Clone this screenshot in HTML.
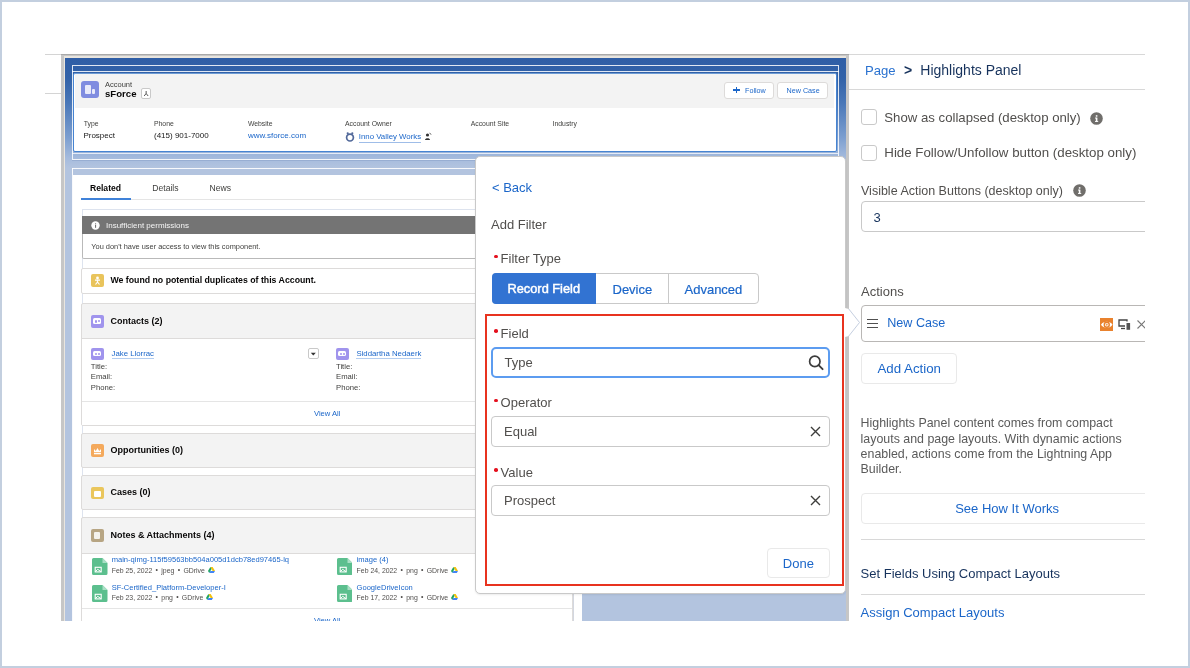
<!DOCTYPE html>
<html><head><meta charset="utf-8"><style>
html,body{margin:0;padding:0;background:#fff}
#root{position:relative;width:1190px;height:668px;overflow:hidden;background:#fff;will-change:transform;font-family:"Liberation Sans",sans-serif}
#frame{position:absolute;left:0;top:0;width:1190px;height:668px;box-sizing:border-box;border:2px solid #c3cfdf;pointer-events:none}
.t{position:absolute;white-space:nowrap;line-height:1}
.r{position:absolute}
</style></head><body><div id="root">
<div class="r" style="left:0;top:0;width:1190px;height:621px;overflow:hidden">
<div class="r" style="left:45px;top:54px;width:17px;height:1px;background:#d4d4d4"></div>
<div class="r" style="left:45px;top:93px;width:17px;height:1px;background:#d4d4d4"></div>
<div class="r" style="left:849px;top:54px;width:296px;height:1px;background:#d8d8d8"></div>
<div class="r" style="left:849px;top:89px;width:296px;height:1px;background:#d8d8d8"></div>
<div class="r" style="left:61px;top:54px;width:788px;height:567px;background:#c6c6c6"></div>
<div class="r" style="left:61px;top:54px;width:788px;height:1px;background:#a9a9a9"></div>
<div class="r" style="left:64px;top:56px;width:782px;height:565px;background:#e9e5de"></div>
<div class="r" style="left:65px;top:57.5px;width:781px;height:563.5px;background:linear-gradient(180deg,#2f5ea6 0px,#3262a8 20px,#4977b8 45px,#7d9fd0 80px,#a5bbdd 100px,#b3c4df 110px,#b3c4df 563px)"></div>
<div class="r" style="left:72px;top:65px;width:766.5px;height:95px;border:1px solid rgba(255,255,255,.85);box-sizing:border-box"></div>
<div class="r" style="left:72px;top:71px;width:766.5px;height:1px;background:rgba(255,255,255,.85)"></div>
<div class="r" style="left:73px;top:72.5px;width:764.3px;height:79.5px;background:#fff;border:1.5px solid #4684d2;border-radius:2px;box-sizing:border-box"></div>
<div class="r" style="left:74.5px;top:74px;width:759.5px;height:34.3px;background:#f3f3f3"></div>
<div class="r" style="left:74px;top:72.5px;width:762px;height:1.2999999999999972px;background:#6d9bd4"></div>
<div class="r" style="left:72px;top:152.5px;width:766px;height:1.0px;background:rgba(255,255,255,.75)"></div>
<div class="r" style="left:72px;top:160.3px;width:774px;height:0.8999999999999773px;background:#98aed2"></div>
<div class="r" style="left:72px;top:167.5px;width:510px;height:1.0px;background:rgba(255,255,255,.9)"></div>
<div class="r" style="left:71.5px;top:167.5px;width:1.2000000000000028px;height:453.5px;background:rgba(255,255,255,.9)"></div>
<div class="r" style="left:81px;top:80.8px;width:17.5px;height:17.5px;background:#7f8ce0;border-radius:3px"></div>
<div class="r" style="left:85px;top:85px;width:6.200000000000003px;height:9px;background:rgba(255,255,255,.82);border-radius:1px"></div>
<div class="r" style="left:91.6px;top:89px;width:3.8000000000000114px;height:5px;background:rgba(255,255,255,.82);border-radius:1px"></div>
<div class="t" style="left:105.0px;top:80.85px;font-size:7.5px;color:#3e3e3c;font-weight:400;">Account</div>
<div class="t" style="left:105.0px;top:89.47px;font-size:9.6px;color:#080707;font-weight:700;">sForce</div>
<div class="r" style="left:141px;top:87.5px;width:10.300000000000011px;height:11.0px;border:1px solid #c9c9c9;border-radius:2px;background:#fff;box-sizing:border-box"></div>
<svg class="r" style="left:141px;top:87.5px" width="10.3" height="11" viewBox="0 0 10 11"><path d="M5 3v2.5M5 5.5L3 8M5 5.5L7 8" stroke="#444" stroke-width="0.9" fill="none"/></svg>
<div class="r" style="left:723.7px;top:81.6px;width:50.5px;height:17.200000000000003px;background:#fff;border:1px solid #dddbda;border-radius:3px;box-sizing:border-box"></div>
<div class="r" style="left:777.2px;top:81.6px;width:51.299999999999955px;height:17.200000000000003px;background:#fff;border:1px solid #dddbda;border-radius:3px;box-sizing:border-box"></div>
<div class="r" style="left:733.3px;top:89.3px;width:6.400000000000091px;height:1.2999999999999972px;background:#1b66c9"></div>
<div class="r" style="left:735.8px;top:86.8px;width:1.400000000000091px;height:6.400000000000006px;background:#1b66c9"></div>
<div class="t" style="left:745.0px;top:86.90px;font-size:7.2px;color:#1b66c9;font-weight:400;">Follow</div>
<div class="t" style="left:786.5px;top:86.90px;font-size:7.2px;color:#1b66c9;font-weight:400;">New Case</div>
<div class="t" style="left:83.8px;top:120.80px;font-size:6.85px;color:#3e3e3c;font-weight:400;">Type</div>
<div class="t" style="left:154.0px;top:120.80px;font-size:6.85px;color:#3e3e3c;font-weight:400;">Phone</div>
<div class="t" style="left:247.9px;top:120.80px;font-size:6.85px;color:#3e3e3c;font-weight:400;">Website</div>
<div class="t" style="left:345.0px;top:120.80px;font-size:6.85px;color:#3e3e3c;font-weight:400;">Account Owner</div>
<div class="t" style="left:470.7px;top:120.80px;font-size:6.85px;color:#3e3e3c;font-weight:400;">Account Site</div>
<div class="t" style="left:552.6px;top:120.80px;font-size:6.85px;color:#3e3e3c;font-weight:400;">Industry</div>
<div class="t" style="left:83.4px;top:132.03px;font-size:8.0px;color:#181818;font-weight:400;">Prospect</div>
<div class="t" style="left:154.0px;top:132.03px;font-size:8.0px;color:#181818;font-weight:400;">(415) 901-7000</div>
<div class="t" style="left:247.9px;top:132.23px;font-size:8.0px;color:#1b66c9;font-weight:400;">www.sforce.com</div>
<svg class="r" style="left:345px;top:131px" width="11" height="11" viewBox="0 0 11 11"><circle cx="5" cy="6.6" r="3.4" fill="#fff" stroke="#52699a" stroke-width="1.7"/><circle cx="2.7" cy="2.3" r="1.1" fill="#52699a"/><circle cx="7.3" cy="2.3" r="1.1" fill="#52699a"/></svg>
<div class="t" style="left:358.8px;top:133.36px;font-size:7.84px;color:#1b66c9;font-weight:400;border-bottom:1px solid #9fbde8;line-height:1.05">Inno Valley Works</div>
<svg class="r" style="left:424px;top:131.5px" width="8" height="9" viewBox="0 0 8 9"><circle cx="3.5" cy="3" r="1.6" fill="#333"/><path d="M1 8c0-2.5 5-2.5 5 0z" fill="#333"/><path d="M5.5 1.2l1.8 1.2" stroke="#333" stroke-width="0.8"/></svg>
<div class="r" style="left:72.7px;top:174.5px;width:509.50000000000006px;height:446.5px;background:#fff"></div>
<div class="r" style="left:572px;top:174.5px;width:1.5px;height:446.5px;background:#d3d7e0"></div>
<div class="t" style="left:90.0px;top:184.02px;font-size:8.6px;color:#080707;font-weight:700;">Related</div>
<div class="t" style="left:152.3px;top:184.02px;font-size:8.6px;color:#3e3e3c;font-weight:400;">Details</div>
<div class="t" style="left:209.6px;top:184.02px;font-size:8.6px;color:#3e3e3c;font-weight:400;">News</div>
<div class="r" style="left:81px;top:198.5px;width:492px;height:1.0px;background:#e5e5e5"></div>
<div class="r" style="left:81px;top:198px;width:49.599999999999994px;height:2px;background:#3f82d9"></div>
<div class="r" style="left:81.5px;top:208.5px;width:491.5px;height:0.8000000000000114px;background:#dde3ee"></div>
<div class="r" style="left:81.5px;top:209px;width:0.7999999999999972px;height:412px;background:#dde3ee"></div>
<div class="r" style="left:81.5px;top:216.2px;width:491.5px;height:17.600000000000023px;background:#747474"></div>
<svg class="r" style="left:90.5px;top:221px" width="9" height="9" viewBox="0 0 9 9"><circle cx="4.5" cy="4.5" r="4.2" fill="#fff"/><rect x="4" y="4" width="1.1" height="2.8" fill="#747474"/><rect x="4" y="2.3" width="1.1" height="1.1" fill="#747474"/></svg>
<div class="t" style="left:106.0px;top:221.53px;font-size:8px;color:#f5f5f5;font-weight:400;">Insufficient permissions</div>
<div class="r" style="left:81.5px;top:233.8px;width:491.5px;height:25.19999999999999px;border:1px solid #b9b9b9;border-top:none;border-radius:0 0 2px 2px;box-sizing:border-box;background:#fff"></div>
<div class="t" style="left:91.3px;top:243.03px;font-size:7.4px;color:#3e3e3c;font-weight:400;">You don't have user access to view this component.</div>
<div class="r" style="left:81.4px;top:267.7px;width:491.6px;height:26.30000000000001px;border:1px solid #dddbda;border-radius:2px;box-sizing:border-box;background:#fff"></div>
<div class="r" style="left:90.8px;top:274.2px;width:13.100000000000009px;height:13.100000000000023px;background:#e9c45c;border-radius:2px"></div>
<svg class="r" style="left:90.8px;top:274.2px" width="13" height="13" viewBox="0 0 13 13"><circle cx="6.5" cy="4" r="1.4" fill="#fff"/><path d="M4 6.2h5M6.5 5.5v2.5M6.5 8L4.5 10.5M6.5 8l2 2.5" stroke="#fff" stroke-width="1.2" fill="none"/></svg>
<div class="t" style="left:110.4px;top:276.49px;font-size:8.75px;color:#080707;font-weight:700;">We found no potential duplicates of this Account.</div>
<div class="r" style="left:81.4px;top:303px;width:491.6px;height:123px;border:1px solid #dddbda;border-radius:2px;box-sizing:border-box;background:#f3f3f3"></div>
<div class="r" style="left:82.4px;top:338px;width:489.6px;height:87px;background:#fff;border-top:1px solid #dddbda;box-sizing:border-box"></div>
<div class="r" style="left:90.8px;top:315.1px;width:13.100000000000009px;height:12.800000000000011px;background:#a094ed;border-radius:2px"></div>
<div class="t" style="left:110.4px;top:316.98px;font-size:9.0px;color:#080707;font-weight:700;">Contacts (2)</div>
<div class="r" style="left:93.2px;top:318.40000000000003px;width:8.0px;height:5.7999999999999545px;background:#fff;border-radius:1.5px"></div>
<div class="r" style="left:95.0px;top:320.40000000000003px;width:1.7999999999999972px;height:2.3999999999999773px;background:#a094ed;border-radius:1px"></div>
<div class="r" style="left:98.0px;top:320.40000000000003px;width:1.5999999999999943px;height:1.7999999999999545px;background:#a094ed;border-radius:1px"></div>
<div class="r" style="left:90.8px;top:347.5px;width:12.799999999999997px;height:12.699999999999989px;background:#a094ed;border-radius:2px"></div>
<div class="r" style="left:93.2px;top:350.9px;width:8.0px;height:5.600000000000023px;background:#fff;border-radius:1.5px"></div>
<div class="r" style="left:95.0px;top:352.9px;width:1.7999999999999972px;height:2.3000000000000114px;background:#a094ed;border-radius:1px"></div>
<div class="r" style="left:98.0px;top:352.9px;width:1.5999999999999943px;height:1.7000000000000455px;background:#a094ed;border-radius:1px"></div>
<div class="t" style="left:111.5px;top:350.20px;font-size:7.8px;color:#1b66c9;font-weight:400;border-bottom:1px solid #b3cdf0;line-height:1.02">Jake Llorrac</div>
<div class="t" style="left:90.8px;top:363.08px;font-size:7.7px;color:#3e3e3c;font-weight:400;">Title:</div>
<div class="t" style="left:90.8px;top:373.38px;font-size:7.7px;color:#3e3e3c;font-weight:400;">Email:</div>
<div class="t" style="left:90.8px;top:383.88px;font-size:7.7px;color:#3e3e3c;font-weight:400;">Phone:</div>
<div class="r" style="left:336px;top:347.5px;width:12.800000000000011px;height:12.699999999999989px;background:#a094ed;border-radius:2px"></div>
<div class="r" style="left:338.4px;top:350.9px;width:8.0px;height:5.600000000000023px;background:#fff;border-radius:1.5px"></div>
<div class="r" style="left:340.2px;top:352.9px;width:1.8000000000000114px;height:2.3000000000000114px;background:#a094ed;border-radius:1px"></div>
<div class="r" style="left:343.2px;top:352.9px;width:1.6000000000000227px;height:1.7000000000000455px;background:#a094ed;border-radius:1px"></div>
<div class="t" style="left:356.4px;top:350.20px;font-size:7.8px;color:#1b66c9;font-weight:400;border-bottom:1px solid #b3cdf0;line-height:1.02">Siddartha Nedaerk</div>
<div class="t" style="left:336.0px;top:363.08px;font-size:7.7px;color:#3e3e3c;font-weight:400;">Title:</div>
<div class="t" style="left:336.0px;top:373.38px;font-size:7.7px;color:#3e3e3c;font-weight:400;">Email:</div>
<div class="t" style="left:336.0px;top:383.88px;font-size:7.7px;color:#3e3e3c;font-weight:400;">Phone:</div>
<div class="r" style="left:307.7px;top:348.3px;width:11.0px;height:10.399999999999977px;border:1px solid #c9c9c9;border-radius:2px;box-sizing:border-box;background:#fff"></div>
<svg class="r" style="left:310px;top:350.5px" width="6.5" height="6" viewBox="0 0 6.5 6"><path d="M0.8 1.8h5L3.3 4.6z" fill="#333"/></svg>
<div class="r" style="left:82.4px;top:400.6px;width:489.6px;height:1.0px;background:#e5e5e5"></div>
<div class="t" style="left:314.0px;top:409.87px;font-size:7.6px;color:#1b66c9;font-weight:400;">View All</div>
<div class="r" style="left:81.4px;top:432.6px;width:491.6px;height:35.0px;border:1px solid #dddbda;border-radius:2px;box-sizing:border-box;background:#f3f3f3"></div>
<div class="r" style="left:90.8px;top:444.0px;width:13.100000000000009px;height:12.800000000000011px;background:#f4a95c;border-radius:2px"></div>
<div class="t" style="left:110.4px;top:445.88px;font-size:9.0px;color:#080707;font-weight:700;">Opportunities (0)</div>
<svg class="r" style="left:90.8px;top:444px" width="13" height="13" viewBox="0 0 13 13"><path d="M3 5l1.8 2 1.7-3 1.7 3L10 5v3.3H3z" fill="#fff"/><rect x="3" y="9" width="7" height="1.3" fill="#fff"/></svg>
<div class="r" style="left:81.4px;top:474.8px;width:491.6px;height:35.39999999999998px;border:1px solid #dddbda;border-radius:2px;box-sizing:border-box;background:#f3f3f3"></div>
<div class="r" style="left:90.8px;top:486.6px;width:13.100000000000009px;height:12.800000000000011px;background:#eac65c;border-radius:2px"></div>
<div class="t" style="left:110.4px;top:488.48px;font-size:9.0px;color:#080707;font-weight:700;">Cases (0)</div>
<div class="r" style="left:94px;top:491px;width:6.700000000000003px;height:6px;background:#fff;border-radius:1px"></div>
<div class="r" style="left:81.4px;top:517.2px;width:491.6px;height:142.79999999999995px;border:1px solid #dddbda;border-radius:2px;box-sizing:border-box;background:#f3f3f3"></div>
<div class="r" style="left:82.4px;top:552.6px;width:489.6px;height:106.39999999999998px;background:#fff;border-top:1px solid #dddbda;box-sizing:border-box"></div>
<div class="r" style="left:90.8px;top:528.8px;width:13.100000000000009px;height:12.799999999999955px;background:#b7a583;border-radius:2px"></div>
<div class="t" style="left:110.4px;top:530.68px;font-size:9.0px;color:#080707;font-weight:700;">Notes &amp; Attachments (4)</div>
<div class="r" style="left:94.3px;top:531.5px;width:6.200000000000003px;height:7.5px;background:rgba(255,255,255,.85);border-radius:1px"></div>
<svg class="r" style="left:92px;top:558.1px" width="15.5" height="17" viewBox="0 0 15.5 17"><path d="M1.5 0h9l5 5v10.5a1.5 1.5 0 0 1-1.5 1.5h-12.5A1.5 1.5 0 0 1 0 15.5v-14A1.5 1.5 0 0 1 1.5 0z" fill="#5cbf8e"/><path d="M10.5 0v5h5z" fill="#a9e0c5"/><rect x="3.2" y="9.3" width="6" height="4.6" fill="none" stroke="#fff" stroke-width="1.1"/><path d="M3.5 13.5l2.2-2.2 3.3 2.4" stroke="#fff" stroke-width="1" fill="none"/></svg>
<div class="t" style="left:111.7px;top:556.21px;font-size:7.55px;color:#1b66c9;font-weight:400;">main-qimg-115f59563bb504a005d1dcb78ed97465-lq</div>
<div class="t" style="left:111.7px;top:566.56px;font-size:6.9px;color:#514f4d;font-weight:400;">Feb 25, 2022<span style="margin:0 3.3px">•</span>jpeg<span style="margin:0 3.3px">•</span>GDrive<svg style="margin-left:3px;vertical-align:-0.5px" width="7" height="6" viewBox="0 0 7 6"><path d="M2.3 0h2.4l2.3 4H4.6z" fill="#f4c20d"/><path d="M2.3 0L0 4l1.2 2 2.3-4z" fill="#1fa463"/><path d="M1.2 6h4.6L7 4H2.4z" fill="#4285f4"/></svg></div>
<svg class="r" style="left:92px;top:585.4px" width="15.5" height="17" viewBox="0 0 15.5 17"><path d="M1.5 0h9l5 5v10.5a1.5 1.5 0 0 1-1.5 1.5h-12.5A1.5 1.5 0 0 1 0 15.5v-14A1.5 1.5 0 0 1 1.5 0z" fill="#5cbf8e"/><path d="M10.5 0v5h5z" fill="#a9e0c5"/><rect x="3.2" y="9.3" width="6" height="4.6" fill="none" stroke="#fff" stroke-width="1.1"/><path d="M3.5 13.5l2.2-2.2 3.3 2.4" stroke="#fff" stroke-width="1" fill="none"/></svg>
<div class="t" style="left:111.7px;top:583.51px;font-size:7.55px;color:#1b66c9;font-weight:400;">SF-Certified_Platform-Developer-I</div>
<div class="t" style="left:111.7px;top:593.86px;font-size:6.9px;color:#514f4d;font-weight:400;">Feb 23, 2022<span style="margin:0 3.3px">•</span>png<span style="margin:0 3.3px">•</span>GDrive<svg style="margin-left:3px;vertical-align:-0.5px" width="7" height="6" viewBox="0 0 7 6"><path d="M2.3 0h2.4l2.3 4H4.6z" fill="#f4c20d"/><path d="M2.3 0L0 4l1.2 2 2.3-4z" fill="#1fa463"/><path d="M1.2 6h4.6L7 4H2.4z" fill="#4285f4"/></svg></div>
<svg class="r" style="left:336.8px;top:558.1px" width="15.5" height="17" viewBox="0 0 15.5 17"><path d="M1.5 0h9l5 5v10.5a1.5 1.5 0 0 1-1.5 1.5h-12.5A1.5 1.5 0 0 1 0 15.5v-14A1.5 1.5 0 0 1 1.5 0z" fill="#5cbf8e"/><path d="M10.5 0v5h5z" fill="#a9e0c5"/><rect x="3.2" y="9.3" width="6" height="4.6" fill="none" stroke="#fff" stroke-width="1.1"/><path d="M3.5 13.5l2.2-2.2 3.3 2.4" stroke="#fff" stroke-width="1" fill="none"/></svg>
<div class="t" style="left:356.6px;top:556.21px;font-size:7.55px;color:#1b66c9;font-weight:400;">image (4)</div>
<div class="t" style="left:356.6px;top:566.56px;font-size:6.9px;color:#514f4d;font-weight:400;">Feb 24, 2022<span style="margin:0 3.3px">•</span>png<span style="margin:0 3.3px">•</span>GDrive<svg style="margin-left:3px;vertical-align:-0.5px" width="7" height="6" viewBox="0 0 7 6"><path d="M2.3 0h2.4l2.3 4H4.6z" fill="#f4c20d"/><path d="M2.3 0L0 4l1.2 2 2.3-4z" fill="#1fa463"/><path d="M1.2 6h4.6L7 4H2.4z" fill="#4285f4"/></svg></div>
<svg class="r" style="left:336.8px;top:585.4px" width="15.5" height="17" viewBox="0 0 15.5 17"><path d="M1.5 0h9l5 5v10.5a1.5 1.5 0 0 1-1.5 1.5h-12.5A1.5 1.5 0 0 1 0 15.5v-14A1.5 1.5 0 0 1 1.5 0z" fill="#5cbf8e"/><path d="M10.5 0v5h5z" fill="#a9e0c5"/><rect x="3.2" y="9.3" width="6" height="4.6" fill="none" stroke="#fff" stroke-width="1.1"/><path d="M3.5 13.5l2.2-2.2 3.3 2.4" stroke="#fff" stroke-width="1" fill="none"/></svg>
<div class="t" style="left:356.6px;top:583.51px;font-size:7.55px;color:#1b66c9;font-weight:400;">GoogleDriveIcon</div>
<div class="t" style="left:356.6px;top:593.86px;font-size:6.9px;color:#514f4d;font-weight:400;">Feb 17, 2022<span style="margin:0 3.3px">•</span>png<span style="margin:0 3.3px">•</span>GDrive<svg style="margin-left:3px;vertical-align:-0.5px" width="7" height="6" viewBox="0 0 7 6"><path d="M2.3 0h2.4l2.3 4H4.6z" fill="#f4c20d"/><path d="M2.3 0L0 4l1.2 2 2.3-4z" fill="#1fa463"/><path d="M1.2 6h4.6L7 4H2.4z" fill="#4285f4"/></svg></div>
<div class="r" style="left:82.4px;top:607.5px;width:489.6px;height:1.0px;background:#e5e5e5"></div>
<div class="t" style="left:314.0px;top:617.07px;font-size:7.6px;color:#1b66c9;font-weight:400;">View All</div>
<div class="r" style="left:474.6px;top:155.8px;width:371.9px;height:438.7px;background:#fff;border:1px solid #c9c9c9;border-radius:5px;box-sizing:border-box;box-shadow:0 1px 2px rgba(0,0,0,.08)"></div>
<div class="t" style="left:492.0px;top:181.49px;font-size:13px;color:#1b66c9;font-weight:400;">&lt; Back</div>
<div class="t" style="left:491.0px;top:217.69px;font-size:13px;color:#514f4d;font-weight:400;">Add Filter</div>
<div class="r" style="left:494.2px;top:254.7px;width:3.5px;height:3.5px;border-radius:50%;background:#e4101e"></div>
<div class="t" style="left:500.6px;top:252.19px;font-size:13px;color:#514f4d;font-weight:400;">Filter Type</div>
<div class="r" style="left:491.8px;top:272.8px;width:267.7px;height:31.19999999999999px;border:1px solid #c9c9c9;border-radius:4px;box-sizing:border-box;background:#fff"></div>
<div class="r" style="left:491.8px;top:272.8px;width:104.19999999999999px;height:31.19999999999999px;background:#3273d2;border-radius:4px 0 0 4px"></div>
<div class="r" style="left:668px;top:272.8px;width:1px;height:31.19999999999999px;background:#c9c9c9"></div>
<div class="t" style="left:507.5px;top:283.16px;font-size:12.8px;color:#fff;font-weight:400;-webkit-text-stroke:0.45px #fff">Record Field</div>
<div class="t" style="left:612.5px;top:283.19px;font-size:13px;color:#1b66c9;font-weight:400;-webkit-text-stroke:0.2px #1b66c9">Device</div>
<div class="t" style="left:684.5px;top:283.19px;font-size:13px;color:#1b66c9;font-weight:400;-webkit-text-stroke:0.2px #1b66c9">Advanced</div>
<div class="r" style="left:485px;top:314px;width:358.70000000000005px;height:272px;border:2px solid #e8331f;box-sizing:border-box"></div>
<div class="r" style="left:494.2px;top:329.2px;width:3.5px;height:3.5px;border-radius:50%;background:#e4101e"></div>
<div class="t" style="left:500.6px;top:326.69px;font-size:13px;color:#514f4d;font-weight:400;">Field</div>
<div class="r" style="left:490.9px;top:346.6px;width:338.70000000000005px;height:31.0px;border:2px solid #5c9cf0;border-radius:5px;box-sizing:border-box;background:#fff"></div>
<div class="t" style="left:504.5px;top:356.19px;font-size:13px;color:#514f4d;font-weight:400;">Type</div>
<svg class="r" style="left:807px;top:354px" width="17" height="17" viewBox="0 0 17 17"><circle cx="7.8" cy="7.4" r="5.2" fill="none" stroke="#3c3c3c" stroke-width="1.7"/><path d="M11.6 11.2l4 4" stroke="#3c3c3c" stroke-width="1.9" stroke-linecap="round"/></svg>
<div class="r" style="left:494.2px;top:398.5px;width:3.5px;height:3.5px;border-radius:50%;background:#e4101e"></div>
<div class="t" style="left:500.6px;top:395.99px;font-size:13px;color:#514f4d;font-weight:400;">Operator</div>
<div class="r" style="left:490.9px;top:416.2px;width:339.30000000000007px;height:30.80000000000001px;border:1px solid #c9c9c9;border-radius:4px;box-sizing:border-box;background:#fff"></div>
<div class="t" style="left:504.0px;top:425.39px;font-size:13px;color:#514f4d;font-weight:400;">Equal</div>
<svg class="r" style="left:809.7px;top:426.1px" width="11" height="11" viewBox="0 0 11 11"><path d="M1 1L10 10M10 1L1 10" stroke="#3e3e3c" stroke-width="1.4"/></svg>
<div class="r" style="left:494.2px;top:468.1px;width:3.5px;height:3.5px;border-radius:50%;background:#e4101e"></div>
<div class="t" style="left:500.6px;top:465.59px;font-size:13px;color:#514f4d;font-weight:400;">Value</div>
<div class="r" style="left:490.9px;top:485.2px;width:339.30000000000007px;height:30.80000000000001px;border:1px solid #c9c9c9;border-radius:4px;box-sizing:border-box;background:#fff"></div>
<div class="t" style="left:504.0px;top:494.49px;font-size:13px;color:#514f4d;font-weight:400;">Prospect</div>
<svg class="r" style="left:809.7px;top:495.2px" width="11" height="11" viewBox="0 0 11 11"><path d="M1 1L10 10M10 1L1 10" stroke="#3e3e3c" stroke-width="1.4"/></svg>
<div class="r" style="left:766.5px;top:547.7px;width:63.5px;height:30.799999999999955px;border:1px solid #e9e9e9;border-radius:4px;box-sizing:border-box;background:#fff"></div>
<div class="t" style="left:782.8px;top:557.09px;font-size:13px;color:#1b66c9;font-weight:400;">Done</div>
<div class="r" style="left:849px;top:55px;width:296px;height:566px;overflow:hidden">
<div class="t" style="left:16.0px;top:9.11px;font-size:13.1px;color:#2a72d0;font-weight:400;">Page</div>
<div class="t" style="left:55.0px;top:8.35px;font-size:14px;color:#16325c;font-weight:700;">&gt;</div>
<div class="t" style="left:71.3px;top:8.35px;font-size:14px;color:#16325c;font-weight:400;">Highlights Panel</div>
<div class="r" style="left:12px;top:54.2px;width:15.5px;height:15.599999999999994px;border:1px solid #c9c9c9;border-radius:3px;box-sizing:border-box"></div>
<div class="t" style="left:35.3px;top:55.52px;font-size:13.2px;color:#514f4d;font-weight:400;">Show as collapsed (desktop only)</div>
<div class="r" style="left:12px;top:90px;width:15.5px;height:15.599999999999994px;border:1px solid #c9c9c9;border-radius:3px;box-sizing:border-box"></div>
<div class="t" style="left:35.3px;top:91.44px;font-size:13.3px;color:#514f4d;font-weight:400;">Hide Follow/Unfollow button (desktop only)</div>
<svg class="r" style="left:240.79999999999995px;top:57.400000000000006px" width="13" height="13" viewBox="0 0 13 13"><circle cx="6.5" cy="6.5" r="6.3" fill="#706e6b"/><rect x="5.8" y="5.6" width="1.6" height="4.2" fill="#fff"/><rect x="5.8" y="3.2" width="1.6" height="1.5" fill="#fff"/><rect x="5" y="5.6" width="1.5" height="0.9" fill="#fff"/><rect x="5" y="9" width="3.2" height="0.9" fill="#fff"/></svg>
<div class="t" style="left:12.0px;top:130.02px;font-size:12.5px;color:#514f4d;font-weight:400;">Visible Action Buttons (desktop only)</div>
<svg class="r" style="left:223.5px;top:129.1px" width="13" height="13" viewBox="0 0 13 13"><circle cx="6.5" cy="6.5" r="6.3" fill="#706e6b"/><rect x="5.8" y="5.6" width="1.6" height="4.2" fill="#fff"/><rect x="5.8" y="3.2" width="1.6" height="1.5" fill="#fff"/><rect x="5" y="5.6" width="1.5" height="0.9" fill="#fff"/><rect x="5" y="9" width="3.2" height="0.9" fill="#fff"/></svg>
<div class="r" style="left:12px;top:146px;width:299px;height:31.19999999999999px;border:1px solid #c9c9c9;border-radius:4px;box-sizing:border-box"></div>
<div class="t" style="left:24.6px;top:155.69px;font-size:13px;color:#16325c;font-weight:400;">3</div>
<div class="t" style="left:12.0px;top:230.49px;font-size:13px;color:#514f4d;font-weight:400;">Actions</div>
<div class="r" style="left:12px;top:250px;width:299px;height:36.5px;border:1px solid #b9b7b5;border-radius:4px;box-sizing:border-box"></div>
<div class="r" style="left:17.600000000000023px;top:263.70000000000005px;width:11.600000000000023px;height:1.7999999999999545px;background:#505050"></div>
<div class="r" style="left:17.600000000000023px;top:267.70000000000005px;width:11.600000000000023px;height:1.7999999999999545px;background:#505050"></div>
<div class="r" style="left:17.600000000000023px;top:271.70000000000005px;width:11.600000000000023px;height:1.7999999999999545px;background:#505050"></div>
<div class="t" style="left:38.2px;top:262.33px;font-size:12.6px;color:#1b66c9;font-weight:400;">New Case</div>
<div class="r" style="left:250.79999999999995px;top:263px;width:13.5px;height:13.399999999999977px;background:#e9822e"></div>
<svg class="r" style="left:250.8px;top:263px" width="13.5" height="13.4" viewBox="0 0 13.5 13.4"><path d="M1 6.7C3.3 2.9 10.2 2.9 12.5 6.7 10.2 10.5 3.3 10.5 1 6.7z" fill="#fff"/><circle cx="6.75" cy="6.7" r="2.5" fill="none" stroke="#e9822e" stroke-width="1.4"/><path d="M6.75 5.6v2.2M5.65 6.7h2.2" stroke="#e9822e" stroke-width="0.7"/></svg>
<svg class="r" style="left:268.5px;top:264px" width="13" height="11" viewBox="0 0 13 11"><path d="M9 2.5V1H1v6h6" fill="none" stroke="#444" stroke-width="1.3"/><rect x="8.5" y="4" width="3.6" height="6.8" fill="#555"/><path d="M3 9.5h4" stroke="#444" stroke-width="1.3"/></svg>
<svg class="r" style="left:287.5px;top:265px" width="9" height="9" viewBox="0 0 9 9"><path d="M0.5 0.5L8.5 8.5M8.5 0.5L0.5 8.5" stroke="#777" stroke-width="1.1"/></svg>
<div class="r" style="left:12.299999999999955px;top:298.3px;width:96.20000000000005px;height:30.69999999999999px;border:1px solid #e9e9e9;border-radius:4px;box-sizing:border-box"></div>
<div class="t" style="left:28.4px;top:307.24px;font-size:13.3px;color:#1b66c9;font-weight:400;">Add Action</div>
<div class="t" style="left:11.6px;top:362.20px;font-size:12.4px;color:#5a5a5a;font-weight:400;">Highlights Panel content comes from compact</div>
<div class="t" style="left:11.6px;top:377.57px;font-size:12.4px;color:#5a5a5a;font-weight:400;">layouts and page layouts. With dynamic actions</div>
<div class="t" style="left:11.6px;top:392.94px;font-size:12.4px;color:#5a5a5a;font-weight:400;">enabled, actions come from the Lightning App</div>
<div class="t" style="left:11.6px;top:408.31px;font-size:12.4px;color:#5a5a5a;font-weight:400;">Builder.</div>
<div class="r" style="left:11.799999999999955px;top:438.2px;width:299.20000000000005px;height:31.099999999999966px;border:1px solid #e9e9e9;border-radius:4px;box-sizing:border-box"></div>
<div class="t" style="left:106.2px;top:446.89px;font-size:13px;color:#1b66c9;font-weight:400;">See How It Works</div>
<div class="r" style="left:11.799999999999955px;top:484.20000000000005px;width:284.20000000000005px;height:1.0px;background:#d8d8d8"></div>
<div class="t" style="left:11.6px;top:511.89px;font-size:13px;color:#16325c;font-weight:400;">Set Fields Using Compact Layouts</div>
<div class="r" style="left:11.799999999999955px;top:539px;width:284.20000000000005px;height:1px;background:#d8d8d8"></div>
<div class="t" style="left:11.6px;top:550.99px;font-size:13px;color:#1b66c9;font-weight:400;">Assign Compact Layouts</div>
</div>
<svg class="r" style="left:845px;top:308px" width="17" height="29" viewBox="0 0 17 29"><path d="M0 0L3.8 1 14.5 14.5 3.8 28 0 29z" fill="#fff"/><path d="M3.8 1L14.5 14.5 3.8 28" fill="none" stroke="#c5cfe0" stroke-width="1"/></svg>
</div>
<div id="frame"></div>
</div></body></html>
